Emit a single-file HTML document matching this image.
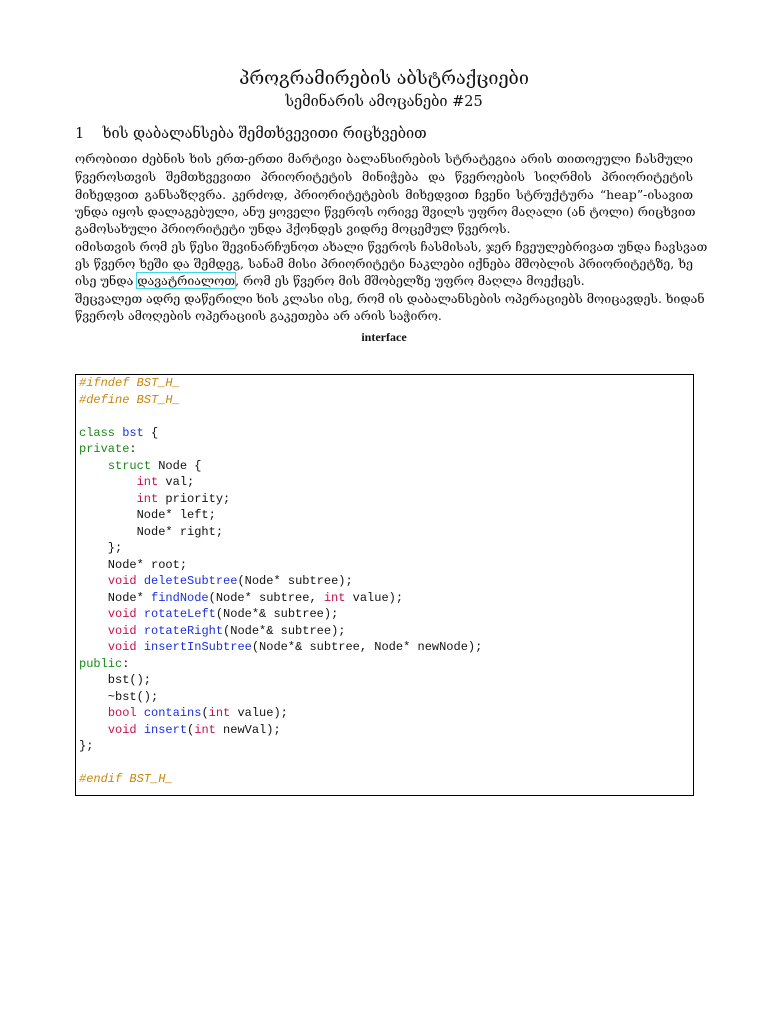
<!DOCTYPE html>
<html><head><meta charset="utf-8">
<style>
body{margin:0;background:#fff;width:768px;height:1024px;position:relative;font-family:"DejaVu Serif","DejaVu Sans",serif;color:#111;}
.a{position:absolute;white-space:nowrap;}
.t{left:0;width:768px;text-align:center;}
.l{position:absolute;left:75px;width:618px;font-size:12.4px;text-align:justify;text-align-last:justify;white-space:nowrap;line-height:17px;}
.l.e{text-align-last:left;}
.box{position:absolute;left:75px;top:374px;width:617px;height:420px;border:1px solid #000;}
pre{position:absolute;left:79px;top:375px;margin:0;font-family:"Liberation Mono",monospace;font-size:12px;line-height:16.5px;color:#111;}
.p{color:#c8860a;font-style:italic}.k{color:#1a8a1a}.b{color:#1c2fe0}.r{color:#c8104a}
</style></head><body>
<div class="a t" style="top:68px;font-size:18px;">პროგრამირების აბსტრაქციები</div>
<div class="a t" style="top:94px;font-size:14.5px;">სემინარის ამოცანები #25</div>
<div class="a" style="left:75px;top:126px;font-size:14.5px;">1&nbsp;&nbsp;&nbsp;&nbsp;ხის დაბალანსება შემთხვევითი რიცხვებით</div>
<div class="l" style="top:150px">ორობითი ძებნის ხის ერთ-ერთი მარტივი ბალანსირების სტრატეგია არის თითოეული ჩასმული</div>
<div class="l" style="top:168px">წვეროსთვის შემთხვევითი პრიორიტეტის მინიჭება და წვეროების სიღრმის პრიორიტეტის</div>
<div class="l" style="top:186px">მიხედვით განსაზღვრა. კერძოდ, პრიორიტეტების მიხედვით ჩვენი სტრუქტურა “heap”-ისავით</div>
<div class="l" style="top:203px">უნდა იყოს დალაგებული, ანუ ყოველი წვეროს ორივე შვილს უფრო მაღალი (ან ტოლი) რიცხვით</div>
<div class="l e" style="top:220px">გამოსახული პრიორიტეტი უნდა ჰქონდეს ვიდრე მოცემულ წვეროს.</div>
<div class="l" style="top:238px">იმისთვის რომ ეს წესი შევინარჩუნოთ ახალი წვეროს ჩასმისას, ჯერ ჩვეულებრივათ უნდა ჩავსვათ</div>
<div class="l" style="top:255px">ეს წვერო ხეში და შემდეგ, სანამ მისი პრიორიტეტი ნაკლები იქნება მშობლის პრიორიტეტზე, ხე</div>
<div class="l e" style="top:272px">ისე უნდა <span style="outline:1px solid #3fd6f0">დავატრიალოთ</span>, რომ ეს წვერო მის მშობელზე უფრო მაღლა მოექცეს.</div>
<div class="l" style="top:290px">შეცვალეთ ადრე დაწერილი ხის კლასი ისე, რომ ის დაბალანსების ოპერაციებს მოიცავდეს. ხიდან</div>
<div class="l e" style="top:307px">წვეროს ამოღების ოპერაციის გაკეთება არ არის საჭირო.</div>
<div class="a t" style="top:330px;font-size:12px;font-weight:bold;font-family:'Liberation Serif',serif;">interface</div>
<div class="box"></div>
<pre><span class="p">#ifndef BST_H_</span>
<span class="p">#define BST_H_</span>

<span class="k">class</span> <span class="b">bst</span> {
<span class="k">private</span>:
    <span class="k">struct</span> Node {
        <span class="r">int</span> val;
        <span class="r">int</span> priority;
        Node* left;
        Node* right;
    };
    Node* root;
    <span class="r">void</span> <span class="b">deleteSubtree</span>(Node* subtree);
    Node* <span class="b">findNode</span>(Node* subtree, <span class="r">int</span> value);
    <span class="r">void</span> <span class="b">rotateLeft</span>(Node*&amp; subtree);
    <span class="r">void</span> <span class="b">rotateRight</span>(Node*&amp; subtree);
    <span class="r">void</span> <span class="b">insertInSubtree</span>(Node*&amp; subtree, Node* newNode);
<span class="k">public</span>:
    bst();
    ~bst();
    <span class="r">bool</span> <span class="b">contains</span>(<span class="r">int</span> value);
    <span class="r">void</span> <span class="b">insert</span>(<span class="r">int</span> newVal);
};

<span class="p">#endif BST_H_</span></pre>
</body></html>
